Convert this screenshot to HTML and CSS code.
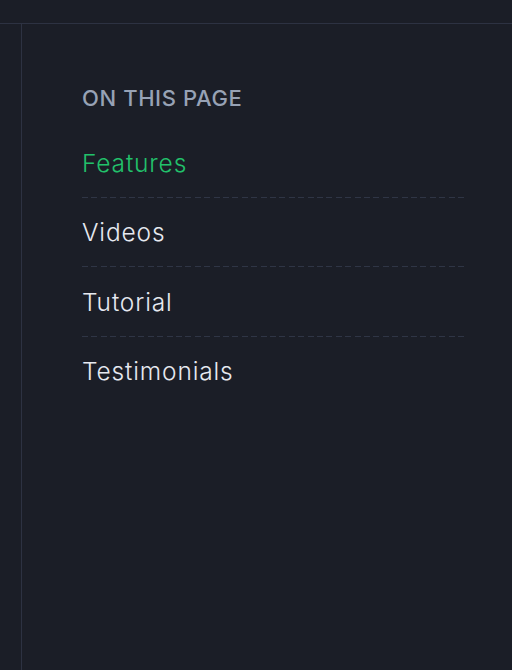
FILE: index.html
```html
<!DOCTYPE html>
<html lang="en">
<head>
<meta charset="utf-8">
<title>On this page</title>
<link rel="stylesheet" href="styles.css">
</head>
<body>
<div class="topbar"></div>
<div class="main">
  <div class="left"></div>
  <aside class="toc">
    <h2 class="toc-title">ON THIS PAGE</h2>
    <ul class="toc-list">
      <li class="toc-item active">Features</li>
      <li class="toc-item">Videos</li>
      <li class="toc-item">Tutorial</li>
      <li class="toc-item">Testimonials</li>
    </ul>
  </aside>
</div>
</body>
</html>
```
FILE: styles.css
```css
html, body {
  margin: 0;
  padding: 0;
  background: #1b1e27;
  height: 100%;
}
body {
  font-family: Inter, "Noto Sans", "Liberation Sans", sans-serif;
  display: flex;
  flex-direction: column;
}
.topbar {
  height: 23px;
  border-bottom: 1px solid #2d3242;
  flex: none;
}
.main {
  flex: 1;
  display: flex;
}
.left {
  width: 21px;
  border-right: 1px solid #2d3242;
  flex: none;
}
.toc {
  flex: 1;
  padding: 60px 46px 0 60px;
}
.toc-title {
  margin: 0 0 16px;
  font-size: 22px;
  line-height: 28px;
  font-weight: 500;
  color: #97a2b5;
  letter-spacing: 0.6px;
}
.toc-list {
  list-style: none;
  margin: 0;
  padding: 0;
}
.toc-item {
  font-size: 24.5px;
  line-height: 32px;
  font-weight: 350;
  letter-spacing: 0.85px;
  padding: 18.5px 0 19px;
  color: #e6e9f0;
  background-image: repeating-linear-gradient(to right, #2f3545 0 6px, transparent 6px 9.4px);
  background-size: 100% 1px;
  background-repeat: no-repeat;
  background-position: left bottom;
}
.toc-item:last-child {
  background-image: none;
}
.toc-item.active {
  color: #22c16b;
}
```
